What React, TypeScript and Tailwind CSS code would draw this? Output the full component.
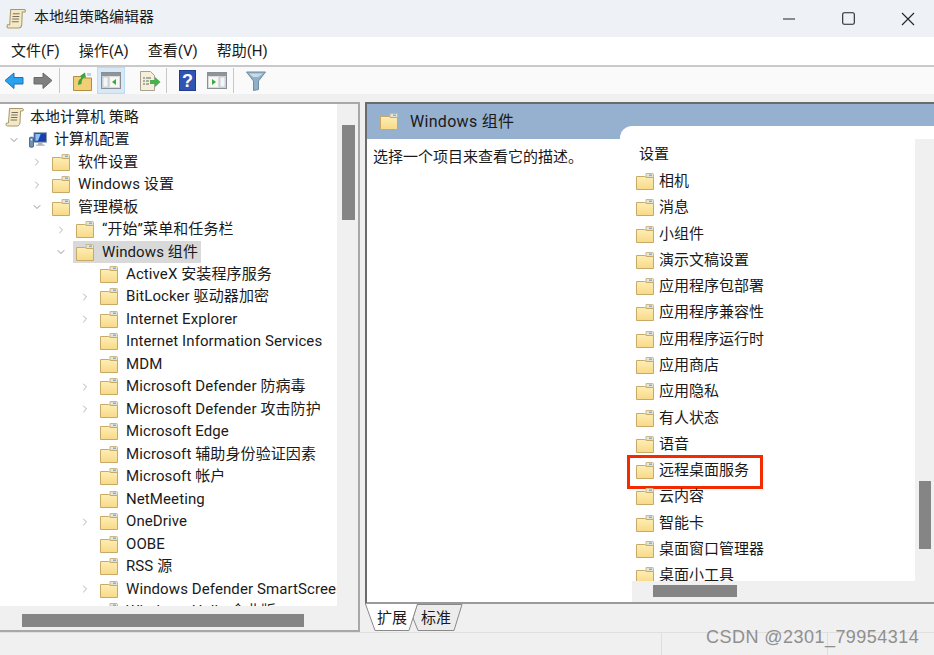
import { ChevronDown, ChevronRight } from "lucide-react";

type TreeNode = {
  label: string;
  depth: 1 | 2 | 3 | 4;
  chevron?: "open" | "closed";
  selected?: boolean;
  computer?: boolean;
};

const TREE: TreeNode[] = [
  { label: "计算机配置", depth: 1, chevron: "open", computer: true },
  { label: "软件设置", depth: 2, chevron: "closed" },
  { label: "Windows 设置", depth: 2, chevron: "closed" },
  { label: "管理模板", depth: 2, chevron: "open" },
  { label: "“开始”菜单和任务栏", depth: 3, chevron: "closed" },
  { label: "Windows 组件", depth: 3, chevron: "open", selected: true },
  { label: "ActiveX 安装程序服务", depth: 4 },
  { label: "BitLocker 驱动器加密", depth: 4, chevron: "closed" },
  { label: "Internet Explorer", depth: 4, chevron: "closed" },
  { label: "Internet Information Services", depth: 4 },
  { label: "MDM", depth: 4 },
  { label: "Microsoft Defender 防病毒", depth: 4, chevron: "closed" },
  { label: "Microsoft Defender 攻击防护", depth: 4, chevron: "closed" },
  { label: "Microsoft Edge", depth: 4 },
  { label: "Microsoft 辅助身份验证因素", depth: 4 },
  { label: "Microsoft 帐户", depth: 4 },
  { label: "NetMeeting", depth: 4 },
  { label: "OneDrive", depth: 4, chevron: "closed" },
  { label: "OOBE", depth: 4 },
  { label: "RSS 源", depth: 4 },
  { label: "Windows Defender SmartScreen", depth: 4, chevron: "closed" },
  { label: "Windows Hello 企业版", depth: 4 },
];

const SETTINGS = [
  "相机",
  "消息",
  "小组件",
  "演示文稿设置",
  "应用程序包部署",
  "应用程序兼容性",
  "应用程序运行时",
  "应用商店",
  "应用隐私",
  "有人状态",
  "语音",
  "远程桌面服务",
  "云内容",
  "智能卡",
  "桌面窗口管理器",
  "桌面小工具",
];

const DEPTH_PADDING = {
  1: "pl-[6px]",
  2: "pl-[29px]",
  3: "pl-[53px]",
  4: "pl-[77px]",
};

function Folder() {
  return (
    <svg width="18" height="17" viewBox="0 0 18 17" className="shrink-0">
      <defs>
        <linearGradient id="folder-fill" x1="0" y1="0" x2="0" y2="1">
          <stop offset="0" stopColor="#fdeeb5" />
          <stop offset="1" stopColor="#f8d987" />
        </linearGradient>
      </defs>
      <path d="M10 .5h6.500a1 1 0 0 1 1 1v3H10z" fill="#e9e4d2" stroke="#c9b98a" />
      <rect x="13" y="1.500" width="3" height="1.600" fill="#7fb2dc" />
      <path d="M.5 3.500h8.200L11 4.500h6.500v12H.5z" fill="url(#folder-fill)" stroke="#c8aa68" />
    </svg>
  );
}

function ScrollDoc({ size = 20 }: { size?: number }) {
  return (
    <svg width={size} height={size} viewBox="0 0 20 20" className="shrink-0">
      <path d="M4.500 1.500h12.800c1.200 0 1.500 1.200.7 2.400h-2.500L15 16c-.3 2-1.500 3-3 3H2.500C1 19 .5 17.500 1.500 16h2z" fill="#f4e9c6" stroke="#a7976b" />
      <path d="M6.500 5.500h6.500M6.200 8h6.500M5.900 10.500h6.500M5.600 13h6.500" stroke="#77705c" strokeWidth="1" />
    </svg>
  );
}

function Computer() {
  return (
    <svg width="18" height="17" viewBox="0 0 20 18" className="-mr-[1px] shrink-0">
      <rect x="5.500" y="1.500" width="14" height="10.500" fill="#1b3fb0" stroke="#8d9bab" />
      <path d="M7 3h6l-3 7.500H7z" fill="#8cc3f2" />
      <path d="M10 12.500h5v2h2.500v1.500H8v-1.500h2z" fill="#aab3bc" />
      <rect x=".5" y="6.500" width="4.500" height="11" rx="1" fill="#6d93b5" stroke="#48617a" />
      <rect x="2" y="8.500" width="1.500" height="1.500" fill="#fff" />
    </svg>
  );
}

function TreeRow({ node }: { node: TreeNode }) {
  return (
    <div className={`flex h-[22.48px] items-center ${DEPTH_PADDING[node.depth]}`}>
      <span className="flex w-[16px] shrink-0 justify-center text-[#6f6f6f]">
        {node.chevron === "open" && <ChevronDown size={12} strokeWidth={1.5} />}
        {node.chevron === "closed" && <ChevronRight size={12} strokeWidth={1.5} className="text-[#9a9a9a]" />}
      </span>
      <span className={`ml-[4px] flex h-[22px] items-center gap-[8px] px-[3px] ${node.selected ? "bg-[#d9d9d9]" : ""}`}>
        {node.computer ? <Computer /> : <Folder />}
        <span className="tracking-[0.1px] whitespace-nowrap">{node.label}</span>
      </span>
    </div>
  );
}

function BackArrow({ on }: { on: boolean }) {
  const d = on ? "M1 9.500 10 2v4.500h9v6.500h-9v4.500z" : "M19 9.500 10 2v4.500H1v6.500h9v4.500z";
  return (
    <svg width="20" height="19" viewBox="0 0 20 19">
      <path d={d} fill={on ? "#29a3ee" : "#7f7f7f"} stroke={on ? "#1f6fb8" : "#6a6a6a"} strokeLinejoin="round" />
    </svg>
  );
}

function UpFolder() {
  return (
    <svg width="19" height="20" viewBox="0 0 19 20">
      <path d="M.5 5.500h7l2 1.500h9v12.500H.5z" fill="#f2cf77" stroke="#b08f45" />
      <path d="M5 14c0-4 1-6 3.500-7L7 5l5-3.500L13 7l-2-.5C9 8 8.500 10 8.500 13z" fill="#3fa33a" />
      <rect x="14" y="2" width="4" height="3" fill="#b9d4ea" />
    </svg>
  );
}

function PaneIcon({ flip }: { flip?: boolean }) {
  return (
    <svg width="20" height="17" viewBox="0 0 20 17">
      <rect x=".5" y=".5" width="19" height="16" fill="#d9dadb" stroke="#8a8f94" />
      <rect x="1" y="1" width="18" height="3" fill="#8f9499" />
      <rect x={flip ? 2 : 9} y="5" width="9" height="10" fill="#f7f8f4" />
      <rect x={flip ? 13 : 2} y="5" width="5" height="10" fill="#f3f5f8" stroke="#a9b3bd" strokeWidth=".5" />
      <path d={flip ? "M5 7l4 3-4 3z" : "M15 7l-4 3 4 3z"} fill="#3bab3f" />
    </svg>
  );
}

function ExportIcon() {
  return (
    <svg width="22" height="20" viewBox="0 0 22 20">
      <path d="M1.500.5h10l4 4v15h-14z" fill="#f5eed8" stroke="#a5a195" />
      <path d="M4 7h2M7 7h5M4 10h2M7 10h3M4 13h2M7 13h3" stroke="#666" />
      <path d="M11 9h5V6l5.500 5-5.500 5v-3h-5z" fill="#45b24a" />
    </svg>
  );
}

function HelpIcon() {
  return (
    <div className="flex h-[21px] w-[17px] items-center justify-center border border-[#1f3c8e] bg-[#2f55b4] font-['Liberation_Sans',sans-serif] text-[18px] leading-none font-bold text-white">
      ?
    </div>
  );
}

function FilterIcon() {
  return (
    <svg width="20" height="20" viewBox="0 0 20 20">
      <path d="M.5 1h19L12.500 10v8.500l-5 1V10z" fill="#8fb0c6" stroke="#708ea3" />
      <path d="M3 2.500h14L12 6H7z" fill="#c9dbe6" />
    </svg>
  );
}

function ToolbarDivider() {
  return <div className="h-[25px] w-px bg-[#c8c8c8]" />;
}

export default function App() {
  return (
    <div className="relative flex h-[655px] w-[934px] flex-col overflow-hidden bg-[#f0f0f0] font-['Roboto','Noto_Sans_CJK_SC',sans-serif] text-[15px] leading-none text-[#1a1a1a]">
      {/* Title bar */}
      <div className="flex h-[37px] shrink-0 items-center bg-[#eef2f7] pl-[6px]">
        <ScrollDoc size={21} />
        <span className="mb-[3px] ml-[7px]">本地组策略编辑器</span>
        <div className="ml-auto flex items-center text-black">
          <svg width="13" height="2" viewBox="0 0 13 2" className="mr-[46px]">
            <path d="M0 1h12" stroke="#222" strokeWidth="1" />
          </svg>
          <svg width="13" height="13" viewBox="0 0 13 13" className="mr-[46px]">
            <rect x=".7" y=".7" width="11.600" height="11.600" rx="1.500" fill="none" stroke="#222" strokeWidth="1.100" />
          </svg>
          <svg width="14" height="14" viewBox="0 0 14 14" className="mr-[19px]">
            <path d="M1 1l12 12M13 1L1 13" stroke="#222" strokeWidth="1.100" />
          </svg>
        </div>
      </div>

      {/* Menu */}
      <div className="flex h-[28px] shrink-0 items-center gap-[19px] bg-white pl-[11px]">
        <span>文件(F)</span>
        <span>操作(A)</span>
        <span>查看(V)</span>
        <span>帮助(H)</span>
      </div>
      <div className="h-[2px] shrink-0 bg-[#c9c9cc]" />

      {/* Toolbar */}
      <div className="flex h-[27px] shrink-0 items-center bg-[#fafafa] pl-[4px]">
        <BackArrow on />
        <div className="ml-[9px]">
          <BackArrow on={false} />
        </div>
        <div className="mx-[6px]">
          <ToolbarDivider />
        </div>
        <div className="ml-[7px]">
          <UpFolder />
        </div>
        <div className="ml-[5px] flex h-[27px] w-[28px] items-center justify-center border border-[#bcdcf4] bg-[#d5e9f9]">
          <PaneIcon />
        </div>
        <div className="ml-[14px]">
          <ExportIcon />
        </div>
        <div className="ml-[5px]">
          <ToolbarDivider />
        </div>
        <div className="ml-[12px]">
          <HelpIcon />
        </div>
        <div className="ml-[11px]">
          <PaneIcon flip />
        </div>
        <div className="ml-[6px]">
          <ToolbarDivider />
        </div>
        <div className="ml-[12px]">
          <FilterIcon />
        </div>
      </div>
      <div className="h-[8px] shrink-0 bg-[#f0f0f0]" />

      {/* Main area */}
      <div className="flex h-[530px] shrink-0">
        {/* Tree panel */}
        <div className="flex h-full w-[360px] shrink-0 flex-col border-t-2 border-r-2 border-b-2 border-[#a8a8a8]">
          <div className="flex h-[502px] shrink-0">
            <div className="w-[337px] overflow-hidden bg-white pt-[2px]">
              <div className="flex h-[22.48px] items-center gap-[5px] pl-[5px]">
                <ScrollDoc />
                <span>本地计算机 策略</span>
              </div>
              {TREE.map((node) => (
                <TreeRow key={node.label} node={node} />
              ))}
            </div>
            <div className="flex-1 bg-[#f0f0f0] pt-[21px] pl-[5px]">
              <div className="h-[95px] w-[13px] bg-[#858585]" />
            </div>
          </div>
          <div className="flex-1 bg-[#f0f0f0] pt-[8px] pl-[22px]">
            <div className="h-[13px] w-[282px] bg-[#858585]" />
          </div>
        </div>

        {/* Detail panel */}
        <div className="ml-[5px] flex min-w-0 flex-1 flex-col">
          <div className="flex h-[502px] shrink-0 border-t-2 border-b-2 border-l-2 border-t-[#6b6b6b] border-b-[#9a9a9a] border-l-[#6b6b6b] bg-white">
            <div className="flex w-[253px] shrink-0 flex-col">
              <div className="flex h-[35px] shrink-0 items-center gap-[12px] bg-[#96b0cf] pl-[13px]">
                <Folder />
                <span className="text-[16px] tracking-[0.3px]">Windows 组件</span>
              </div>
              <p className="pt-[11px] pl-[6px]">选择一个项目来查看它的描述。</p>
            </div>
            <div className="flex min-w-0 flex-1 flex-col">
              <div className="h-[35px] shrink-0 bg-[#96b0cf] pt-[22px]">
                <div className="h-[13px] rounded-tl-[12px] bg-white" />
              </div>
              <div className="flex min-h-0 flex-1">
                <div className="flex min-w-0 flex-1 flex-col">
                  <div className="min-h-0 flex-1 overflow-hidden bg-white pl-[12px]">
                    <div className="h-[29.5px] pt-[8px] pl-[7px]">设置</div>
                    {SETTINGS.map((name) => (
                      <div key={name} className="relative flex h-[26.27px] items-center gap-[5px] pl-[4px]">
                        <Folder />
                        <span className="whitespace-nowrap">{name}</span>
                        {name === "远程桌面服务" && (
                          <div className="absolute top-[-2px] left-[-5px] h-[34px] w-[136px] border-[3px] border-[#f42a00]" />
                        )}
                      </div>
                    ))}
                  </div>
                  <div className="flex h-[21px] shrink-0">
                    <div className="w-[12px] shrink-0 bg-white" />
                    <div className="flex-1 bg-[#f0f0f0] pt-[4px] pl-[21px]">
                      <div className="h-[12px] w-[84px] bg-[#858585]" />
                    </div>
                  </div>
                </div>
                <div className="w-[19px] shrink-0 bg-[#f0f0f0] pt-[342px] pl-[4px]">
                  <div className="h-[68px] w-[12px] bg-[#858585]" />
                </div>
              </div>
            </div>
          </div>

          {/* Tabs */}
          <div className="relative flex h-[28px] items-center text-[#1a1a1a]">
            <svg width="100" height="28" viewBox="0 0 100 28" className="absolute top-0 left-0">
              <path d="M48 14 52 .5h45L89 26.500H53z" fill="#ececec" stroke="#8a8a8a" />
              <path d="M.5 0 10 26.500h34L52.500 0" fill="#fff" stroke="#8a8a8a" />
            </svg>
            <span className="relative ml-[12px]">扩展</span>
            <span className="relative ml-[14px]">标准</span>
          </div>
        </div>
      </div>

      {/* Status bar */}
      <div className="flex flex-1 border-t border-[#e0e0e0]">
        <div className="w-[662px] border-r border-[#dedede]" />
        <div className="w-[166px] border-r border-[#dedede]" />
      </div>

      {/* Watermark */}
      <div className="absolute top-[627px] left-[706px] font-['Liberation_Sans',sans-serif] text-[18px] leading-[20px] tracking-[0.46px] whitespace-nowrap text-[#8f8f8f]">
        CSDN @2301_79954314
      </div>
    </div>
  );
}
